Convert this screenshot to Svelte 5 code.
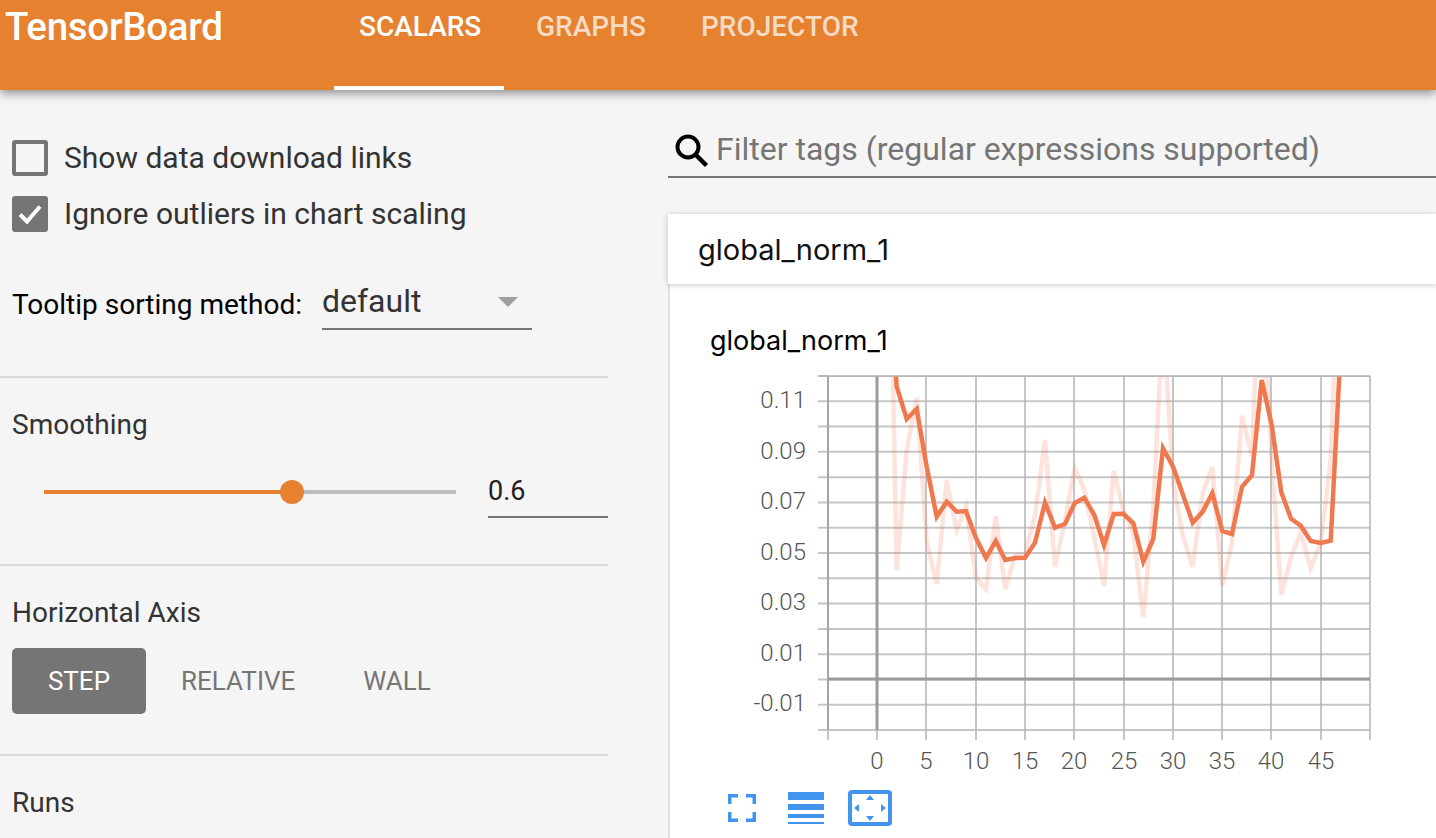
<script>
  const smooth = [[896,376],[896.7,386.7],[906.7,419],[916.7,409],[926.7,466.7],[936.7,516.7],[946.7,501.7],[956.7,511.7],[966,511],[976,538],[986,558],[995.7,541],[1005.3,560],[1015.3,558],[1025,557.7],[1035,542.7],[1045,502.7],[1055,527.7],[1065,524],[1074.7,503],[1084.3,497.7],[1094.3,515],[1104,545],[1113.7,514],[1123.3,513.7],[1133.3,523.3],[1143.3,561.7],[1153.3,539],[1163,448.3],[1173.3,467.3],[1183,495],[1192.7,522.7],[1202.7,511.7],[1212.3,493.3],[1222.3,531],[1232,534],[1242,486.7],[1252,475],[1261.7,380],[1271.7,425],[1281.3,492.3],[1291,518.7],[1300.7,525.7],[1310.7,541],[1320.7,543],[1330.7,540.7],[1339.3,376]];
  const raw = [[893,376],[896.7,570],[906.7,450],[916.7,398],[926.7,541.7],[936.7,584],[946.7,480],[956.7,530],[966,506.7],[976,578],[986,589.3],[995.7,516],[1005.3,589.3],[1015.3,555],[1025,555],[1035,515],[1045,440],[1055,566.7],[1065,520],[1074.7,468],[1084.3,490],[1094.3,536.7],[1104,585.7],[1113.7,470.7],[1123.3,510],[1133.3,533.3],[1143.3,617.3],[1153.3,507],[1160,376],[1166.7,376],[1173.3,483],[1183,536.7],[1192.7,566.7],[1202.7,493],[1212.3,467],[1222.3,585.7],[1232,543],[1242,415.7],[1252,456.7],[1255,376],[1267.3,376],[1271.7,460],[1281.3,595],[1291,556.7],[1300.7,533],[1310.7,568.3],[1320.7,543],[1330.7,460],[1334,376]];
  const pts = (a) => a.map((p) => p.join(',')).join(' ');
  const hs = Array.from({ length: 15 }, (_, i) => 376 + i * 25.29);
  const ylabels = [['0.11', 400], ['0.09', 451], ['0.07', 501], ['0.05', 552], ['0.03', 602], ['0.01', 653], ['-0.01', 703]];
  const vs = [828, 877, 926, 976, 1025, 1074, 1124, 1173, 1222, 1271, 1321, 1370];
  const xlabels = ['0', '5', '10', '15', '20', '25', '30', '35', '40', '45'];
</script>

<div class="page">
  <header class="topbar">
    <div class="brand">TensorBoard</div>
    <nav class="tabs">
      <div class="tab active">SCALARS</div>
      <div class="tab">GRAPHS</div>
      <div class="tab">PROJECTOR</div>
    </nav>
  </header>

  <div class="body">
    <aside class="side">
      <section class="options">
        <label class="check">
          <span class="box"></span>
          <span>Show data download links</span>
        </label>
        <label class="check second">
          <span class="box on">
            <svg width="36" height="36" viewBox="0 0 36 36"><path d="M8 18.5 L15 25.5 L28 10.5" fill="none" stroke="#fff" stroke-width="4"/></svg>
          </span>
          <span>Ignore outliers in chart scaling</span>
        </label>
        <div class="sort">
          <span class="sort-label">Tooltip sorting method:</span>
          <div class="select">
            <span>default</span>
            <span class="caret"></span>
          </div>
        </div>
      </section>

      <section class="smoothing">
        <div class="heading">Smoothing</div>
        <div class="slider-row">
          <div class="track">
            <div class="fill"></div>
            <div class="thumb"></div>
          </div>
          <div class="value">0.6</div>
        </div>
      </section>

      <section class="axis">
        <div class="heading">Horizontal Axis</div>
        <div class="toggle">
          <div class="opt step">STEP</div>
          <div class="opt relative">RELATIVE</div>
          <div class="opt wall">WALL</div>
        </div>
      </section>

      <section class="runs">
        <div class="heading">Runs</div>
      </section>
    </aside>

    <main class="main">
      <div class="filter">
        <svg class="search" width="36" height="36" viewBox="0 0 36 36">
          <circle cx="15" cy="15" r="10.5" fill="none" stroke="#000" stroke-width="4"/>
          <path d="M22.5 22.5 L33.5 33.5" stroke="#000" stroke-width="4.5" fill="none"/>
        </svg>
        <span>Filter tags (regular expressions supported)</span>
      </div>

      <div class="card-head">global_norm_1</div>
      <div class="card">
        <div class="chart-title">global_norm_1</div>
        <svg class="chart" width="766" height="418" viewBox="670 360 766 418">
          {#each vs as x}
            <line x1={x} x2={x} y1="376" y2="740" class="grid" />
          {/each}
          {#each hs as y}
            <line x1="818" x2="1370" y1={y} y2={y} class="grid" />
          {/each}
          <line x1="828" x2="828" y1="376" y2="730" class="frame" />
          <line x1="877" x2="877" y1="376" y2="730" class="zero" />
          <line x1="828" x2="1370" y1="679" y2="679" class="zero" />
          <polyline points={pts(raw)} class="raw" />
          <polyline points={pts(smooth)} class="smooth" />
          <rect x="828" y="340" width="560" height="36" fill="#fff" />
          <line x1="818" x2="1370" y1="376" y2="376" class="grid" />
          {#each ylabels as [t, y]}
            <text x="806" y={y + 8} text-anchor="end" class="tick">{t}</text>
          {/each}
          {#each xlabels as t, i}
            <text x={vs[i + 1]} y="769" text-anchor="middle" class="tick">{t}</text>
          {/each}
        </svg>
        <div class="tools">
          <svg width="28" height="28" viewBox="0 0 28 28">
            <path d="M1.5 10 V1.5 H10 M18 1.5 H26.5 V10 M26.5 18 V26.5 H18 M10 26.5 H1.5 V18" fill="none" stroke="#4295ee" stroke-width="4"/>
          </svg>
          <svg width="36" height="32" viewBox="0 0 36 32">
            <rect x="0" y="0" width="36" height="8" fill="#4295ee"/>
            <rect x="0" y="12" width="36" height="6" fill="#4295ee"/>
            <rect x="0" y="22" width="36" height="4" fill="#4295ee"/>
            <rect x="0" y="30" width="36" height="2" fill="#4295ee"/>
          </svg>
          <svg width="44" height="36" viewBox="0 0 44 36">
            <rect x="2" y="2" width="40" height="32" rx="2" fill="none" stroke="#4295ee" stroke-width="4"/>
            <path d="M22 5 L26 10 H18 Z M22 31 L26 26 H18 Z M6 18 L11 14 V22 Z M38 18 L33 14 V22 Z" fill="#4295ee"/>
          </svg>
        </div>
      </div>
    </main>
  </div>
</div>

<style>
  :global(body) {
    margin: 0;
    background: #f5f5f5;
  }
  .page {
    width: 1436px;
    height: 838px;
    overflow: hidden;
    background: #f5f5f5;
    font-family: Roboto, "Liberation Sans", sans-serif;
    position: relative;
  }
  .topbar {
    height: 90px;
    background: #e6812f;
    display: flex;
    box-shadow: 0 3px 10px rgba(0, 0, 0, 0.45);
    position: relative;
    box-sizing: border-box;
  }
  .brand {
    color: #fff;
    font-size: 38.5px;
    font-weight: 500;
    line-height: 54px;
    padding-left: 5px;
    width: 329px;
    letter-spacing: -0.3px;
  }
  .tabs {
    display: flex;
  }
  .tab {
    color: rgba(255, 255, 255, 0.72);
    font-size: 28px;
    font-weight: 500;
    line-height: 54px;
    padding: 0 25px;
    margin-right: 7px;
    box-sizing: border-box;
    height: 90px;
  }
  .tab:nth-child(2) {
    margin-right: 5px;
  }
  .tab.active {
    color: #fff;
    width: 170px;
    border-bottom: 4px solid #fff;
  }
  .body {
    display: flex;
  }
  .side {
    width: 608px;
    flex: none;
    color: #333;
  }
  section {
    border-bottom: 2px solid #d9d9d9;
    box-sizing: border-box;
    padding-left: 12px;
  }
  .options {
    height: 288px;
    padding-top: 50px;
  }
  .check {
    display: flex;
    align-items: center;
    gap: 16px;
    font-size: 30px;
    line-height: 36px;
    color: #333;
  }
  .check.second {
    margin-top: 20px;
  }
  .box {
    width: 36px;
    height: 36px;
    box-sizing: border-box;
    border: 4px solid #757575;
    border-radius: 3px;
    flex: none;
    display: block;
  }
  .box.on {
    background: #757575;
    border: 0;
  }
  .box svg {
    display: block;
  }
  .sort {
    display: flex;
    align-items: flex-start;
    margin-top: 50px;
  }
  .sort-label {
    font-size: 28px;
    color: #000;
    line-height: 40px;
    margin-top: 3px;
  }
  .select {
    margin-left: 20px;
    width: 210px;
    height: 46px;
    border-bottom: 2px solid #757575;
    font-size: 32px;
    line-height: 38px;
    display: flex;
    justify-content: space-between;
    box-sizing: content-box;
  }
  .caret {
    width: 0;
    height: 0;
    border-left: 10px solid transparent;
    border-right: 10px solid transparent;
    border-top: 10px solid #9e9e9e;
    margin: 15px 14px 0 0;
  }
  .heading {
    font-size: 28px;
    line-height: 36px;
    color: #333;
  }
  .smoothing {
    height: 188px;
    padding-top: 29px;
  }
  .slider-row {
    display: flex;
    align-items: flex-start;
    margin-top: 33px;
    padding-left: 32px;
  }
  .track {
    width: 412px;
    height: 4px;
    background: #bdbdbd;
    position: relative;
    margin-top: 14px;
  }
  .fill {
    width: 248px;
    height: 4px;
    background: #e6812f;
  }
  .thumb {
    position: absolute;
    left: 236px;
    top: -10px;
    width: 24px;
    height: 24px;
    border-radius: 50%;
    background: #e6812f;
  }
  .value {
    margin-left: 32px;
    width: 120px;
    height: 42px;
    box-sizing: border-box;
    border-bottom: 2px solid #757575;
    font-size: 27px;
    line-height: 30px;
    color: #212121;
  }
  .axis {
    height: 190px;
    padding-top: 29px;
  }
  .toggle {
    display: flex;
    margin-top: 17px;
    font-size: 26px;
    color: #757575;
  }
  .opt {
    height: 66px;
    line-height: 66px;
    text-align: center;
  }
  .step {
    width: 134px;
    background: #757575;
    color: #fff;
    border-radius: 5px;
  }
  .relative {
    margin-left: 35px;
  }
  .wall {
    margin-left: 68px;
  }
  .runs {
    border: 0;
    padding-top: 29px;
  }
  .main {
    margin-left: 60px;
    flex: 1;
    min-width: 0;
  }
  .filter {
    height: 88px;
    box-sizing: border-box;
    padding: 41px 0 0 5px;
    border-bottom: 2px solid #757575;
    display: flex;
    align-items: flex-start;
    gap: 7px;
    font-size: 32px;
    line-height: 36px;
    color: #757575;
    white-space: nowrap;
  }
  .search {
    flex: none;
    margin-top: 1px;
  }
  .card-head {
    margin-top: 36px;
    height: 70px;
    background: #fff;
    box-shadow: 0 1px 6px rgba(0, 0, 0, 0.22);
    position: relative;
    z-index: 1;
    font-family: Inter, sans-serif;
    font-size: 29px;
    line-height: 72px;
    padding-left: 30px;
    color: #111;
  }
  .card {
    background: #fff;
    margin-left: 2px;
    box-shadow: -2px 0 0 #e0e0e0;
    height: 560px;
    position: relative;
  }
  .chart-title {
    font-family: Inter, sans-serif;
    font-size: 27px;
    line-height: 36px;
    padding: 39px 0 0 40px;
    color: #000;
  }
  .chart {
    display: block;
    margin-top: 1px;
  }
  .grid {
    stroke: #b4b4b4;
    stroke-width: 2;
    opacity: 0.75;
  }
  .frame {
    stroke: #a6a6a6;
    stroke-width: 2;
  }
  .zero {
    stroke: #9b9b9b;
    stroke-width: 3;
  }
  .raw {
    fill: none;
    stroke: #f0784e;
    stroke-width: 4.5;
    opacity: 0.2;
  }
  .smooth {
    fill: none;
    stroke: #f0784e;
    stroke-width: 4.5;
    stroke-linejoin: miter;
  }
  .tick {
    font-family: Roboto, sans-serif;
    font-weight: 300;
    font-size: 24px;
    fill: #555;
  }
  .tools {
    display: flex;
    align-items: center;
    margin: 12px 0 0 58px;
    gap: 32px;
  }
  .tools svg {
    flex: none;
    display: block;
  }
  .tools svg:last-child {
    margin-left: -8px;
  }
</style>
